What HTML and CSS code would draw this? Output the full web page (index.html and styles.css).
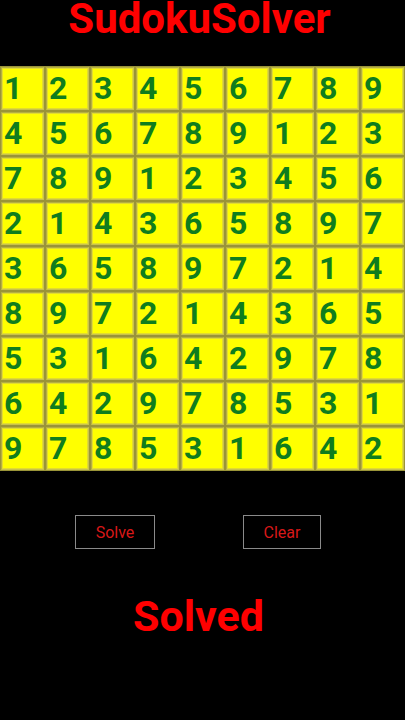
FILE: index.html
```html
<!DOCTYPE html>
<html>
<head>
<meta charset="utf-8">
<link rel="stylesheet" href="styles.css">
</head>
<body>
<div class="app">
  <h1 class="title">SudokuSolver</h1>
  <div class="grid">
    <div class="cell">1</div><div class="cell">2</div><div class="cell">3</div><div class="cell">4</div><div class="cell">5</div><div class="cell">6</div><div class="cell">7</div><div class="cell">8</div><div class="cell">9</div>
    <div class="cell">4</div><div class="cell">5</div><div class="cell">6</div><div class="cell">7</div><div class="cell">8</div><div class="cell">9</div><div class="cell">1</div><div class="cell">2</div><div class="cell">3</div>
    <div class="cell">7</div><div class="cell">8</div><div class="cell">9</div><div class="cell">1</div><div class="cell">2</div><div class="cell">3</div><div class="cell">4</div><div class="cell">5</div><div class="cell">6</div>
    <div class="cell">2</div><div class="cell">1</div><div class="cell">4</div><div class="cell">3</div><div class="cell">6</div><div class="cell">5</div><div class="cell">8</div><div class="cell">9</div><div class="cell">7</div>
    <div class="cell">3</div><div class="cell">6</div><div class="cell">5</div><div class="cell">8</div><div class="cell">9</div><div class="cell">7</div><div class="cell">2</div><div class="cell">1</div><div class="cell">4</div>
    <div class="cell">8</div><div class="cell">9</div><div class="cell">7</div><div class="cell">2</div><div class="cell">1</div><div class="cell">4</div><div class="cell">3</div><div class="cell">6</div><div class="cell">5</div>
    <div class="cell">5</div><div class="cell">3</div><div class="cell">1</div><div class="cell">6</div><div class="cell">4</div><div class="cell">2</div><div class="cell">9</div><div class="cell">7</div><div class="cell">8</div>
    <div class="cell">6</div><div class="cell">4</div><div class="cell">2</div><div class="cell">9</div><div class="cell">7</div><div class="cell">8</div><div class="cell">5</div><div class="cell">3</div><div class="cell">1</div>
    <div class="cell">9</div><div class="cell">7</div><div class="cell">8</div><div class="cell">5</div><div class="cell">3</div><div class="cell">1</div><div class="cell">6</div><div class="cell">4</div><div class="cell">2</div>
  </div>
  <div class="buttons">
    <button class="btn btn-solve">Solve</button>
    <button class="btn btn-clear">Clear</button>
  </div>
  <div class="status">Solved</div>
</div>
</body>
</html>
```

FILE: styles.css
```css
html, body {
  margin: 0;
  padding: 0;
  background: #000;
}
.app {
  width: 405px;
  height: 720px;
  font-family: Roboto, "Liberation Sans", sans-serif;
  display: flex;
  flex-direction: column;
}
.title {
  margin: 0;
  height: 66px;
  font-size: 42px;
  line-height: 38px;
  font-weight: 700;
  color: #ff0000;
  text-align: center;
  padding-right: 6px;
}
.grid {
  display: grid;
  grid-template-columns: repeat(9, 45px);
  grid-template-rows: repeat(9, 45px);
  width: 405px;
  height: 405px;
  background: #9a9438;
}
.cell {
  box-sizing: border-box;
  background: #ffff00;
  border-style: solid;
  border-width: 2px;
  border-color: #b4ae44 #c8c24c #c8c24c #b4ae44;
  box-shadow: inset 0 0 0 1px #e2dc30;
  outline: 1px solid #9a9438;
  outline-offset: -1px;
  color: #0f7d1e;
  font-size: 32px;
  font-weight: 700;
  line-height: 41px;
  padding-left: 2px;
}
.buttons {
  display: flex;
  padding-left: 75px;
  gap: 88px;
  margin-top: 44px;
}
.btn {
  box-sizing: border-box;
  height: 34px;
  background: #000;
  border: 1px solid #8a8a8a;
  color: #d81818;
  font-family: Roboto, "Liberation Sans", sans-serif;
  font-size: 16px;
  padding: 0;
}
.btn-solve { width: 80px; }
.btn-clear { width: 78px; }
.status {
  margin-top: 42px;
  text-align: center;
  color: #ff0000;
  font-size: 43px;
  font-weight: 700;
  line-height: 50px;
  padding-right: 8px;
}
```
